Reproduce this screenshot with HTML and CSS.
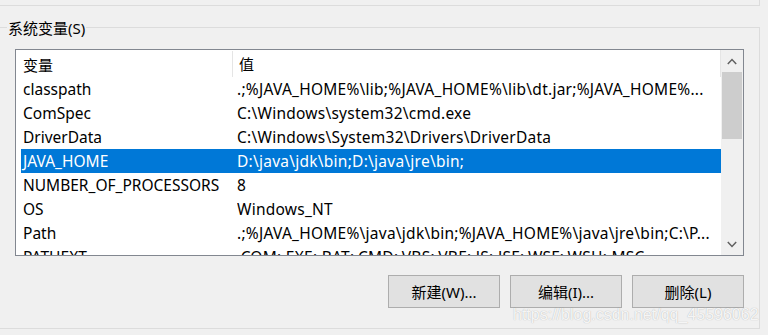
FILE: index.html
```html
<!DOCTYPE html>
<html lang="zh-CN">
<head>
<meta charset="utf-8">
<title>系统变量</title>
<link rel="stylesheet" href="styles.css">
</head>
<body>
<div class="top-frame"></div>
<section class="group">
  <div class="group-title">系统变量(S)</div>
  <div class="listbox">
    <div class="list">
      <div class="list-header">
        <div class="hcol-name">变量</div>
        <div class="hcol-value">值</div>
      </div>
      <div class="rows">
        <div class="row"><span class="name">classpath</span><span class="value">.;%JAVA_HOME%\lib;%JAVA_HOME%\lib\dt.jar;%JAVA_HOME%...</span></div>
        <div class="row"><span class="name">ComSpec</span><span class="value">C:\Windows\system32\cmd.exe</span></div>
        <div class="row"><span class="name">DriverData</span><span class="value">C:\Windows\System32\Drivers\DriverData</span></div>
        <div class="row selected"><span class="name">JAVA_HOME</span><span class="value">D:\java\jdk\bin;D:\java\jre\bin;</span></div>
        <div class="row"><span class="name">NUMBER_OF_PROCESSORS</span><span class="value">8</span></div>
        <div class="row"><span class="name">OS</span><span class="value">Windows_NT</span></div>
        <div class="row"><span class="name">Path</span><span class="value">.;%JAVA_HOME%\java\jdk\bin;%JAVA_HOME%\java\jre\bin;C:\P...</span></div>
        <div class="row"><span class="name">PATHEXT</span><span class="value">.COM;.EXE;.BAT;.CMD;.VBS;.VBE;.JS;.JSE;.WSF;.WSH;.MSC</span></div>
      </div>
    </div>
    <div class="scrollbar">
      <div class="sb-arrow">
        <svg width="10" height="7" viewBox="0 0 10 7"><polyline points="0.8,6 5,1.6 9.2,6" fill="none" stroke="#606060" stroke-width="1.5"/></svg>
      </div>
      <div class="sb-track"><div class="sb-thumb"></div></div>
      <div class="sb-arrow">
        <svg width="10" height="7" viewBox="0 0 10 7"><polyline points="0.8,1 5,5.4 9.2,1" fill="none" stroke="#606060" stroke-width="1.5"/></svg>
      </div>
    </div>
  </div>
  <div class="buttons">
    <button class="btn" type="button">新建(W)...</button>
    <button class="btn" type="button">编辑(I)...</button>
    <button class="btn" type="button">删除(L)</button>
  </div>
</section>
<div class="watermark">https://blog.csdn.net/qq_45596062</div>
</body>
</html>
```

FILE: styles.css
```css
html, body {
  margin: 0;
  padding: 0;
}
body {
  width: 768px;
  height: 335px;
  overflow: hidden;
  position: relative;
  background: #f0f0f0;
  color: #000;
  font-family: "Noto Sans", "Noto Sans CJK SC", sans-serif;
  font-size: 15px;
}
.top-frame {
  width: 759px;
  height: 5px;
  border-right: 1px solid #dcdcdc;
  border-bottom: 1px solid #dcdcdc;
}
.group {
  margin-top: 21px;
  width: 759px;
  height: 300px;
  border-top: 1px solid #dcdcdc;
  border-right: 1px solid #dcdcdc;
  border-bottom: 1px solid #dcdcdc;
}
.group-title {
  width: fit-content;
  margin: -10px 0 0 7px;
  padding: 0 1px;
  height: 20px;
  line-height: 20px;
  background: #f0f0f0;
}
.listbox {
  margin: 11px 0 0 15px;
  width: 729px;
  height: 207px;
  box-sizing: border-box;
  border: 1px solid #828790;
  background: #fff;
  display: flex;
}
.list {
  width: 705px;
  overflow: hidden;
}
.list-header {
  display: flex;
  height: 27px;
  line-height: 28px;
  border-right: 1px solid #e5e5e5;
  box-sizing: border-box;
}
.hcol-name {
  width: 217px;
  box-sizing: border-box;
  padding-left: 7px;
  border-right: 1px solid #e5e5e5;
  margin-top: 1px;
}
.hcol-value {
  padding-left: 6px;
}
.rows {
  padding-left: 5px;
  font-size: 15.5px;
}
.row {
  display: flex;
  height: 24px;
  line-height: 24px;
  white-space: nowrap;
}
.row .name {
  width: 216px;
  flex: none;
  box-sizing: border-box;
  padding-left: 2px;
  overflow: hidden;
}
.row .value {
  overflow: hidden;
  letter-spacing: 0.25px;
}
.row.selected {
  background: #0078d7;
  color: #fff;
}
.scrollbar {
  width: 22px;
  background: #f0f0f0;
  display: flex;
  flex-direction: column;
}
.sb-arrow {
  height: 22px;
  display: flex;
  align-items: center;
  justify-content: center;
}
.sb-track {
  flex: 1;
}
.sb-thumb {
  margin: 0 1px;
  height: 67px;
  background: #cdcdcd;
}
.buttons {
  display: flex;
  justify-content: flex-end;
  gap: 10px;
  width: 744px;
  margin-top: 19px;
}
.btn {
  width: 112px;
  height: 33px;
  margin: 0;
  padding: 0;
  background: #e1e1e1;
  border: 1px solid #adadad;
  border-radius: 0;
  font-family: "Noto Sans", "Noto Sans CJK SC", sans-serif;
  font-size: 15px;
  color: #000;
}
.watermark {
  position: absolute;
  left: 513px;
  top: 305px;
  font-family: "Liberation Sans", Arial, sans-serif;
  font-size: 16px;
  line-height: 20px;
  color: rgba(255, 255, 255, 0.9);
  text-shadow: 0 0 1px rgba(0, 0, 0, 0.3);
  white-space: nowrap;
}
```
